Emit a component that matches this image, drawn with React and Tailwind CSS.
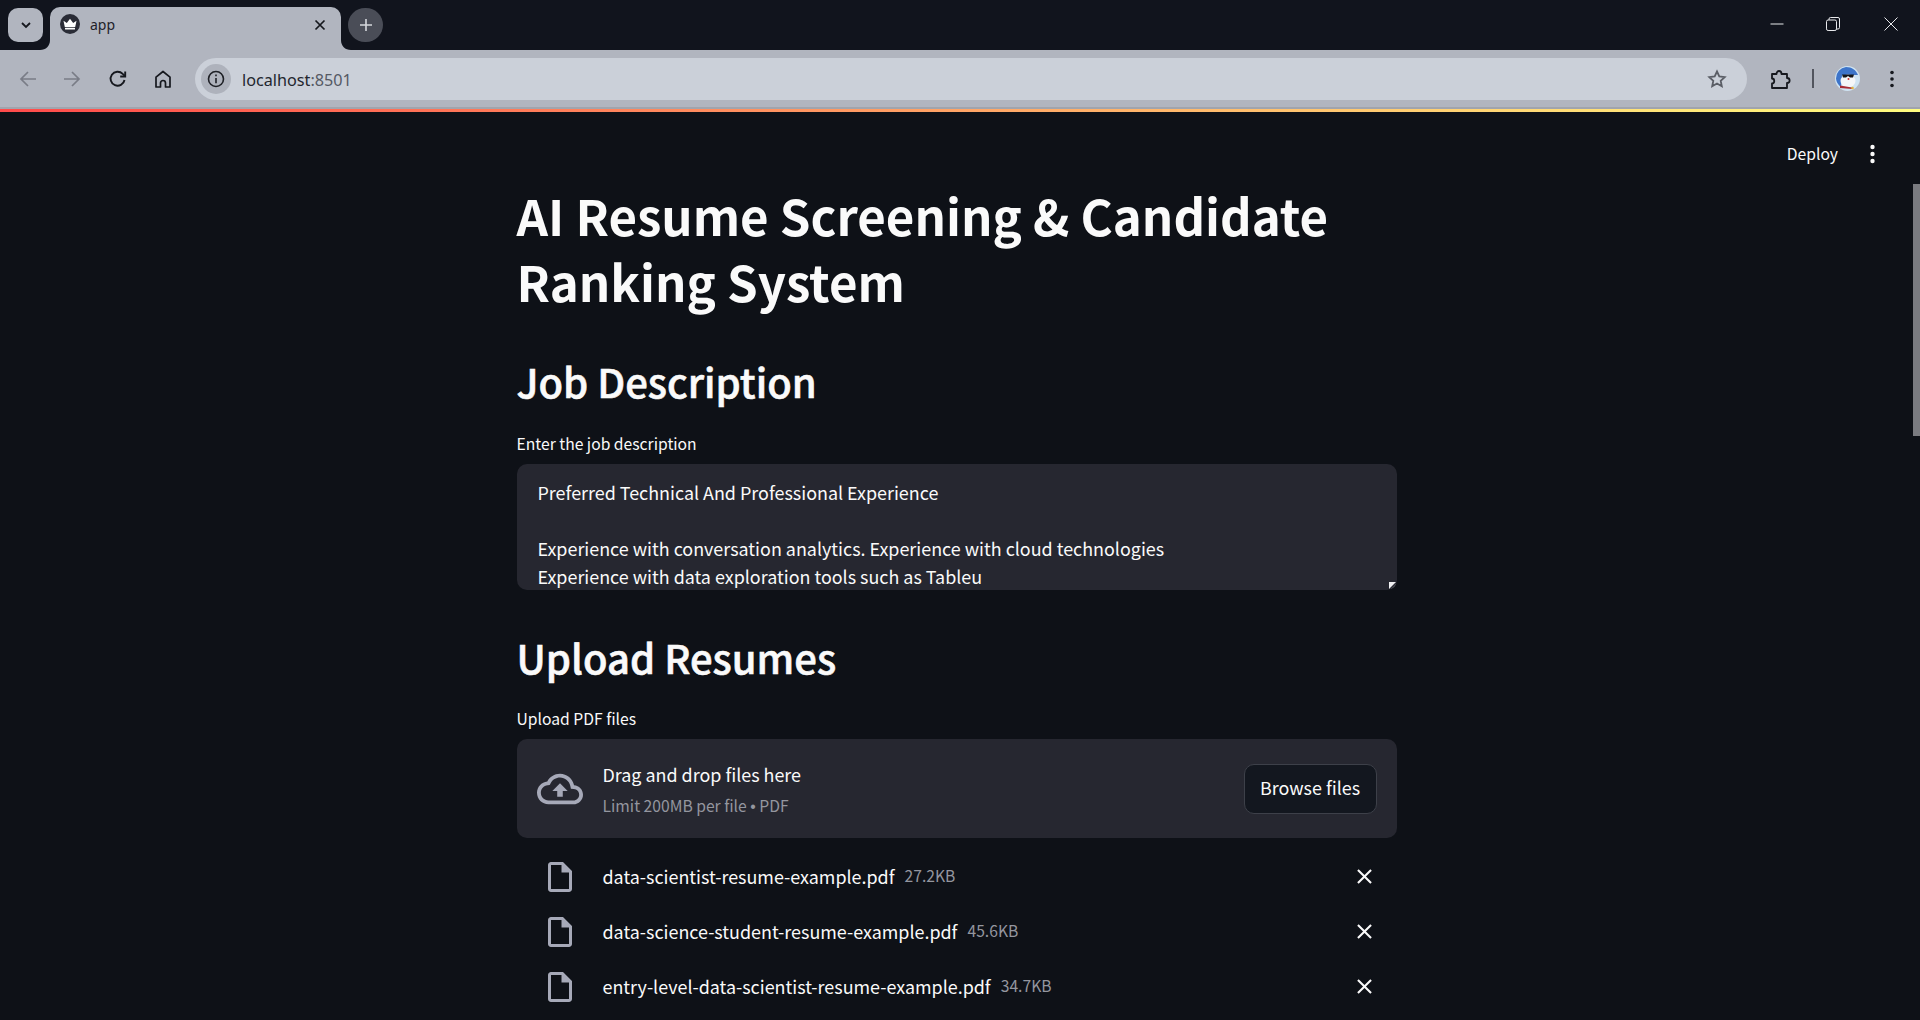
const FONT = "font-['Noto_Sans_CJK_SC',sans-serif]";

const Tab = () => (
  <div className="relative ml-[7px] mt-[7px] flex h-[43px] w-[291px] items-start rounded-t-[10px] bg-[#b1b5bf] pl-[10px] pr-[15px] pt-[7px]">
    <svg className="absolute bottom-0 left-[-10px] h-[10px] w-[10px]" viewBox="0 0 10 10"><path d="M10 0v10H0c6 0 10-4 10-10z" fill="#b1b5bf" /></svg>
    <svg className="absolute bottom-0 right-[-10px] h-[10px] w-[10px]" viewBox="0 0 10 10"><path d="M0 0v10h10C4 10 0 6 0 0z" fill="#b1b5bf" /></svg>
    <svg className="h-[20px] w-[20px] shrink-0" viewBox="0 0 20 20">
      <circle cx="10" cy="10" r="10" fill="#2a2c36" />
      <path d="M3.500 6.800l3.300 2.300L10 4.800l3.200 4.300 3.300-2.300-1.300 6.200H4.800z" fill="#fff" />
      <rect x="5" y="13.700" width="10" height="1.700" rx=".5" fill="#fff" />
    </svg>
    <span className="ml-[10px] mt-[1px] font-['Noto_Sans',sans-serif] text-[14px] leading-[20px] text-[#1f2229]">app</span>
    <svg className="ml-auto mt-[5px] h-[12px] w-[12px]" viewBox="0 0 12 12"><path d="M1.500 1.500l9 9M10.500 1.500l-9 9" stroke="#16181e" strokeWidth="1.700" /></svg>
  </div>
);

const TabStrip = () => (
  <div className="flex h-[50px] shrink-0 bg-[#11141d]">
    <div className="ml-[8px] mt-[8px] flex h-[34px] w-[35px] items-center justify-center rounded-[10px] bg-[#b1b5bf]">
      <svg className="h-[10px] w-[12px]" viewBox="0 0 12 10"><path d="M2 3l4 4 4-4" fill="none" stroke="#16181e" strokeWidth="1.800" /></svg>
    </div>
    <Tab />
    <div className="ml-[7px] mt-[8px] flex h-[34px] w-[35px] items-center justify-center rounded-full bg-[#4a4d57]">
      <svg className="h-[14px] w-[14px]" viewBox="0 0 14 14"><path d="M7 1v12M1 7h12" stroke="#d5d7dc" strokeWidth="1.600" /></svg>
    </div>
    <div className="ml-auto flex h-[48px] items-center">
      <svg className="mr-[42px] h-[14px] w-[14px]" viewBox="0 0 14 14"><path d="M.5 7h13" stroke="#e8e9ec" strokeWidth="1" /></svg>
      <svg className="mr-[44px] h-[14px] w-[14px]" viewBox="0 0 14 14" fill="none" stroke="#e8e9ec"><rect x=".5" y="3" width="10" height="10.500" rx="1.600" /><path d="M3 3V2a1.500 1.500 0 0 1 1.500-1.500H12A1.500 1.500 0 0 1 13.500 2v8.500a1.500 1.500 0 0 1-1.500 1.500H10.500" /></svg>
      <svg className="mr-[22px] h-[14px] w-[14px]" viewBox="0 0 14 14"><path d="M.5.5l13 13M13.500.5l-13 13" stroke="#e8e9ec" strokeWidth="1" /></svg>
    </div>
  </div>
);

const Toolbar = () => (
  <div className="flex h-[59px] shrink-0 items-start border-b-[2px] border-[#a0a4ad] bg-[#b1b5bf]">
    <div className="flex h-[57px] items-center pl-[18px]">
      <svg className="h-[20px] w-[20px]" viewBox="0 0 20 20" fill="none" stroke="#797c86" strokeWidth="1.700"><path d="M18 10H3M10 3l-7 7 7 7" /></svg>
      <svg className="ml-[24px] h-[20px] w-[20px]" viewBox="0 0 20 20" fill="none" stroke="#797c86" strokeWidth="1.700"><path d="M2 10h15M10 3l7 7-7 7" /></svg>
      <svg className="ml-[26px] h-[20px] w-[20px]" viewBox="0 0 20 20" fill="none" stroke="#16181e" strokeWidth="1.900"><path d="M16.500 11a7 7 0 1 1-1.800-6.100L17 7" /><path d="M17.200 2.500V7.500h-5" /></svg>
      <svg className="ml-[25px] h-[20px] w-[20px]" viewBox="0 0 20 20" fill="none" stroke="#16181e" strokeWidth="1.700"><path d="M3 18V8.200L10 2.500l7 5.700V18h-4.500v-4a2.500 2.500 0 0 0-5 0v4z" strokeLinejoin="round" /></svg>
      <div className="ml-[22px] flex h-[42px] w-[1552px] items-center rounded-full bg-[#cbd0d9] pl-[6px] pr-[20px]">
        <div className="flex h-[30px] w-[30px] items-center justify-center rounded-full bg-[#aeb2bc]">
          <svg className="h-[18px] w-[18px]" viewBox="0 0 18 18" fill="none" stroke="#1e2026" strokeWidth="1.600"><circle cx="9" cy="9" r="7.500" /><path d="M9 8v5.200M9 4.500v1.700" /></svg>
        </div>
        <span className="ml-[11px] mt-[2px] font-['Noto_Sans',sans-serif] text-[16.200px] leading-[20px] text-[#23262e]">localhost<span className="text-[#555964]">:8501</span></span>
        <svg className="ml-auto h-[20px] w-[20px]" viewBox="0 0 20 20" fill="none" stroke="#5b5e66" strokeWidth="1.800"><path d="M10 2.500l2.300 5 5.400.600-4 3.700 1.100 5.400L10 14.500l-4.800 2.700 1.100-5.400-4-3.700 5.400-.600z" /></svg>
      </div>
      <svg className="ml-[23px] h-[20px] w-[21px]" viewBox="0 0 21 20" fill="none" stroke="#16181e" strokeWidth="1.800"><path d="M2 5h4.500c0-4 5-4 5 0H17v4c3.500 0 3.500 5 0 5v5H2v-4.500c3 0 3-5 0-5z" strokeLinejoin="round" /></svg>
      <div className="ml-[21px] h-[19px] w-[2px] bg-[#52555e]" />
      <svg className="ml-[21px] h-[25px] w-[25px]" viewBox="0 0 25 25">
        <circle cx="12.500" cy="12.500" r="12.500" fill="#cfe3f2" />
        <path d="M1 12.500A11.500 11.500 0 0 1 11 1c6 0 10 3 12 8l-4 0H7l-1 12A11.500 11.500 0 0 1 1 12.500z" fill="#3d74c9" />
        <ellipse cx="13" cy="15" rx="7.500" ry="6.500" fill="#f5f6f8" />
        <path d="M7 8.500h12l-1 3h-3l-2-1.500-2 1.500H8z" fill="#15161a" />
        <circle cx="13.500" cy="13" r="1" fill="#c8322e" />
        <path d="M5 19.500l12 2 .5 1.500-12.500-1z" fill="#a92c35" />
        <circle cx="17.500" cy="22" r="1.300" fill="#e3b33c" />
      </svg>
      <svg className="ml-[30px] h-[18px] w-[4px]" viewBox="0 0 4 18" fill="#16181e"><circle cx="2" cy="2.500" r="1.800" /><circle cx="2" cy="9" r="1.800" /><circle cx="2" cy="15.500" r="1.800" /></svg>
    </div>
  </div>
);

const Row = ({ name, size }) => (
  <div className="flex h-[55px] items-center pl-[25px] pr-[20px]">
    <svg className="h-[36px] w-[36px] shrink-0" viewBox="0 0 24 24" fill="#a6a9b8"><path d="M14 2H6c-1.100 0-1.990.9-1.990 2L4 20c0 1.100.89 2 1.990 2H18c1.100 0 2-.9 2-2V8l-6-6zM6 20V4h7v5h5v11H6z" /></svg>
    <span className="mb-[2px] ml-[25px] text-[17.920px] leading-[28px] text-[#fafafa]">{name}</span>
    <span className="mb-[2px] ml-[10px] text-[15.680px] leading-[28px] text-[#94969f]">{size}</span>
    <svg className="ml-auto h-[25px] w-[25px] shrink-0" viewBox="0 0 24 24" fill="#fafafa"><path d="M19 6.410L17.590 5 12 10.590 6.410 5 5 6.410 10.590 12 5 17.590 6.410 19 12 13.410 17.590 19 19 17.590 13.410 12 19 6.410z" /></svg>
  </div>
);

const Content = () => (
  <div className={`mx-auto w-[880px] pt-[70px] ${FONT} text-[#fafafa]`}>
    <h1 className="text-[49.200px] font-bold leading-[66px]">AI Resume Screening &amp; Candidate Ranking System</h1>
    <h2 className="mt-[40px] text-[40px] font-medium leading-[54px] [-webkit-text-stroke:0.6px_#fafafa]">Job Description</h2>
    <label className="mt-[22px] block text-[15.680px] leading-[28px]">Enter the job description</label>
    <div className="relative mt-[6px] h-[126px] overflow-hidden rounded-[10px] bg-[#262730] px-[21px] pt-[14px] text-[17.920px] leading-[28px]">
      <p>Preferred Technical And Professional Experience</p>
      <p className="h-[28px]"></p>
      <p>Experience with conversation analytics. Experience with cloud technologies</p>
      <p>Experience with data exploration tools such as Tableu</p>
      <svg className="absolute bottom-[1px] right-[1px] h-[7px] w-[7px]" viewBox="0 0 7 7"><path d="M0 0h7L0 7z" fill="#f0f0f2" /><path d="M7 2L2 7h2l3-3zM7 5L5 7h2z" fill="#6d6e76" /></svg>
    </div>
    <h2 className="mt-[40px] text-[40px] font-medium leading-[54px] [-webkit-text-stroke:0.6px_#fafafa]">Upload Resumes</h2>
    <label className="mt-[21px] block text-[15.680px] leading-[28px]">Upload PDF files</label>
    <div className="mt-[6px] flex h-[99px] items-center rounded-[10px] bg-[#262730] pl-[20px] pr-[20px]">
      <svg className="mt-[1px] h-[46px] w-[46px] shrink-0" viewBox="0 0 24 24" fill="#a6a9b8"><path d="M19.350 10.040C18.670 6.590 15.640 4 12 4 9.110 4 6.600 5.640 5.350 8.040 2.340 8.360 0 10.910 0 14c0 3.310 2.690 6 6 6h13c2.760 0 5-2.240 5-5 0-2.640-2.050-4.780-4.650-4.960zM19 18H6c-2.210 0-4-1.790-4-4 0-2.050 1.530-3.760 3.560-3.970l1.070-.11.5-.95C8.080 7.140 9.940 6 12 6c2.620 0 4.880 1.860 5.390 4.430l.3 1.500 1.530.11c1.560.1 2.780 1.410 2.780 2.960 0 1.650-1.350 3-3 3zM8 13h2.550v3h2.900v-3H16l-4-4z" /></svg>
      <div className="ml-[20px] mt-[3px]">
        <div className="text-[17.920px] leading-[28px]">Drag and drop files here</div>
        <div className="mt-[4px] text-[15.680px] leading-[28px] text-[#94969f]">Limit 200MB per file <span className="font-['Liberation_Sans',sans-serif]">•</span> PDF</div>
      </div>
      <button className="ml-auto h-[50px] w-[133px] rounded-[10px] border border-[#3d4049] bg-[#13171f] pb-[4px] text-[17.920px] leading-[28px] text-[#fafafa]">Browse files</button>
    </div>
    <div className="mt-[11px]">
      <Row name="data-scientist-resume-example.pdf" size="27.2KB" />
      <Row name="data-science-student-resume-example.pdf" size="45.6KB" />
      <Row name="entry-level-data-scientist-resume-example.pdf" size="34.7KB" />
    </div>
  </div>
);

export default function App() {
  return (
    <div className="flex h-[1020px] w-full flex-col overflow-hidden bg-[#0e1117]">
      <TabStrip />
      <Toolbar />
      <div className="h-[3px] shrink-0 bg-[linear-gradient(90deg,#ff4b4b,#fffd80)]" />
      <div className="relative flex min-h-0 flex-1">
        <div className="min-w-0 flex-1 overflow-hidden">
          <Content />
        </div>
        <div className="w-[7px] shrink-0">
          <div className="mt-[72px] h-[252px] w-[7px] bg-[#7a7b80]" />
        </div>
        <div className={`absolute right-[45px] top-[28px] flex items-center ${FONT} text-[15.680px] leading-[28px] text-[#fafafa]`}>
          <span>Deploy</span>
          <svg className="ml-[32px] h-[20px] w-[5px]" viewBox="0 0 5 20" fill="#fafafa"><circle cx="2.500" cy="3" r="2.200" /><circle cx="2.500" cy="10" r="2.200" /><circle cx="2.500" cy="17" r="2.200" /></svg>
        </div>
      </div>
    </div>
  );
}
